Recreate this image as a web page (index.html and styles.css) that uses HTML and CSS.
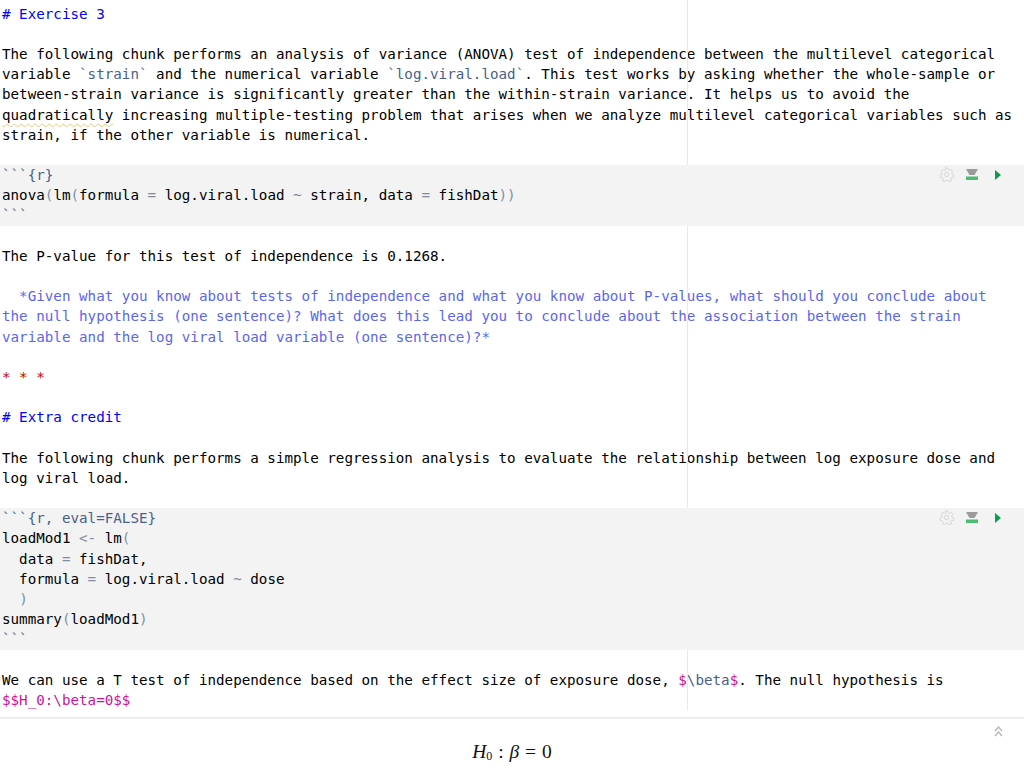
FILE: index.html
```html
<!DOCTYPE html>
<html lang="en">
    <head>
        <meta charset="UTF-8">
        <meta name="viewport" content="width=device-width, initial-scale=1.0">
        <title>Exercise 3</title>
        <link rel="stylesheet" href="styles.css">
    </head>
    <body>
        <div id="App">
            <div id="Editor">
                <div class="MarginLine"></div>
                <div class="Line Head"># Exercise 3</div>
                <div class="Line"> </div>
                <div class="Line">The following chunk performs an analysis of variance (ANOVA) test of independence between the multilevel categorical</div>
                <div class="Line">variable <span class="Code">`strain`</span> and the numerical variable <span class="Code">`log.viral.load`</span>. This test works by asking whether the whole-sample or</div>
                <div class="Line">between-strain variance is significantly greater than the within-strain variance. It helps us to avoid the</div>
                <div class="Line"><span class="Spell">quadratically</span> increasing multiple-testing problem that arises when we analyze multilevel categorical variables such as</div>
                <div class="Line">strain, if the other variable is numerical.</div>
                <div class="Line"> </div>
                <div class="Chunk">
                    <div class="Tools">
                        <svg class="Gear" width="15" height="15" viewBox="0 0 16 16"><path d="M6.6 1h2.8l.4 2 1.500.7 1.800-1 1.700 2-1.200 1.600.4 1.600 1.900.8-.4 2.500-2 .2-1 1.400.6 2-2.300 1-1.200-1.600H7.400l-1.200 1.600-2.300-1 .6-2-1-1.400-2-.2-.4-2.500 1.900-.8.4-1.600-1.200-1.600 1.700-2 1.800 1 1.500-.7z" fill="none" stroke="#D4D4D4"/><circle cx="8" cy="8" r="2.300" fill="none" stroke="#D4D4D4"/></svg>
                        <svg width="12" height="11" viewBox="0 0 12 11"><path d="M0 0h12L8.500 6h-5z" fill="#9B9B9B"/><path d="M0 7.500h12V11H0z" fill="#4DBB73"/></svg>
                        <svg width="6" height="10" viewBox="0 0 6 10"><path d="M0 0l6 5-6 5z" fill="#0A9D50"/></svg>
                    </div>
                    <div class="Line Code">```{r}</div>
                    <div class="Line">anova<span class="Paren">(</span>lm<span class="Paren">(</span>formula <span class="Op">=</span> log.viral.load <span class="Op">~</span> strain, data <span class="Op">=</span> fishDat<span class="Paren">))</span></div>
                    <div class="Line Code">```</div>
                </div>
                <div class="Line"> </div>
                <div class="Line">The P-value for this test of independence is 0.1268.</div>
                <div class="Line"> </div>
                <div class="Line Ask">  *Given what you know about tests of independence and what you know about P-values, what should you conclude about</div>
                <div class="Line Ask">the null hypothesis (one sentence)? What does this lead you to conclude about the association between the strain</div>
                <div class="Line Ask">variable and the log viral load variable (one sentence)?*</div>
                <div class="Line"> </div>
                <div class="Line Rule">* * *</div>
                <div class="Line"> </div>
                <div class="Line Head"># Extra credit</div>
                <div class="Line"> </div>
                <div class="Line">The following chunk performs a simple regression analysis to evaluate the relationship between log exposure dose and</div>
                <div class="Line">log viral load.</div>
                <div class="Line"> </div>
                <div class="Chunk">
                    <div class="Tools">
                        <svg class="Gear" width="15" height="15" viewBox="0 0 16 16"><path d="M6.6 1h2.8l.4 2 1.500.7 1.800-1 1.700 2-1.200 1.600.4 1.600 1.900.8-.4 2.500-2 .2-1 1.400.6 2-2.300 1-1.200-1.600H7.400l-1.200 1.600-2.300-1 .6-2-1-1.400-2-.2-.4-2.500 1.900-.8.4-1.600-1.200-1.600 1.700-2 1.800 1 1.500-.7z" fill="none" stroke="#D4D4D4"/><circle cx="8" cy="8" r="2.300" fill="none" stroke="#D4D4D4"/></svg>
                        <svg width="12" height="11" viewBox="0 0 12 11"><path d="M0 0h12L8.500 6h-5z" fill="#9B9B9B"/><path d="M0 7.500h12V11H0z" fill="#4DBB73"/></svg>
                        <svg width="6" height="10" viewBox="0 0 6 10"><path d="M0 0l6 5-6 5z" fill="#0A9D50"/></svg>
                    </div>
                    <div class="Line Code">```{r, eval=FALSE}</div>
                    <div class="Line">loadMod1 <span class="Op">&lt;-</span> lm<span class="Paren">(</span></div>
                    <div class="Line">  data <span class="Op">=</span> fishDat,</div>
                    <div class="Line">  formula <span class="Op">=</span> log.viral.load <span class="Op">~</span> dose</div>
                    <div class="Line">  <span class="Paren">)</span></div>
                    <div class="Line">summary<span class="Paren">(</span>loadMod1<span class="Paren">)</span></div>
                    <div class="Line Code">```</div>
                </div>
                <div class="Line"> </div>
                <div class="Line">We can use a T test of independence based on the effect size of exposure dose, <span class="Math">$</span><span class="Code">\beta</span><span class="Math">$</span>. The null hypothesis is</div>
                <div class="Line Math">$$H_0:\beta=0$$</div>
            </div>
            <div id="Preview">
                <svg class="Collapse" width="9" height="11" viewBox="0 0 9 11"><path d="M1 5l3.500-4L8 5M1 10l3.500-4L8 10" fill="none" stroke="#B5B5B5" stroke-width="1.300"/></svg>
                <p class="Formula"><i>H</i><sub>0</sub> : <i>β</i> = 0</p>
            </div>
        </div>
    </body>
</html>
```

FILE: styles.css
```css
* {
    margin: 0px;
    padding: 0px;
    box-sizing: border-box;
}
body {
    background-color: #FFFFFF;
    overflow: hidden;
}
#App {
    display: flex;
    flex-direction: column;
    height: 783px;
    width: 1024px;
}
#Editor {
    color: #000000;
    flex: none;
    font-family: "DejaVu Sans Mono", monospace;
    font-size: 14.22px;
    height: 717px;
    overflow: hidden;
    padding-top: 3.6px;
    position: relative;
}
.MarginLine {
    background-color: #E8E8E8;
    height: 710px;
    left: 687px;
    position: absolute;
    top: 0px;
    width: 1px;
}
.Line {
    height: 20.2px;
    line-height: 20.2px;
    padding-left: 2px;
    white-space: pre;
}
.Head {
    color: #0000FF;
}
.Code {
    color: #4A5F8C;
}
.Paren {
    color: #7F90AA;
}
.Op {
    color: #7F8CA3;
}
.Ask {
    color: #5A66F2;
}
.Rule {
    color: #C80000;
}
.Math {
    color: #D0129B;
}
.Spell {
    text-decoration: underline wavy #E8C880 1px;
    text-decoration-skip-ink: none;
    text-underline-offset: 3px;
}
.Chunk {
    background-color: #F3F3F3;
    position: relative;
}
.Tools {
    align-items: center;
    display: flex;
    gap: 17px;
    position: absolute;
    right: 23px;
    top: 2px;
}
.Gear {
    margin-right: -5px;
}
#Preview {
    border-top: 2px solid #EDEDED;
    flex: 1;
    position: relative;
}
.Collapse {
    position: absolute;
    right: 21px;
    top: 7px;
}
.Formula {
    color: #111111;
    font-family: "Liberation Serif", serif;
    font-size: 19.5px;
    margin-top: 22px;
    text-align: center;
    word-spacing: 1px;
}
.Formula sub {
    font-size: 12px;
    line-height: 0;
    vertical-align: -2px;
}
```
